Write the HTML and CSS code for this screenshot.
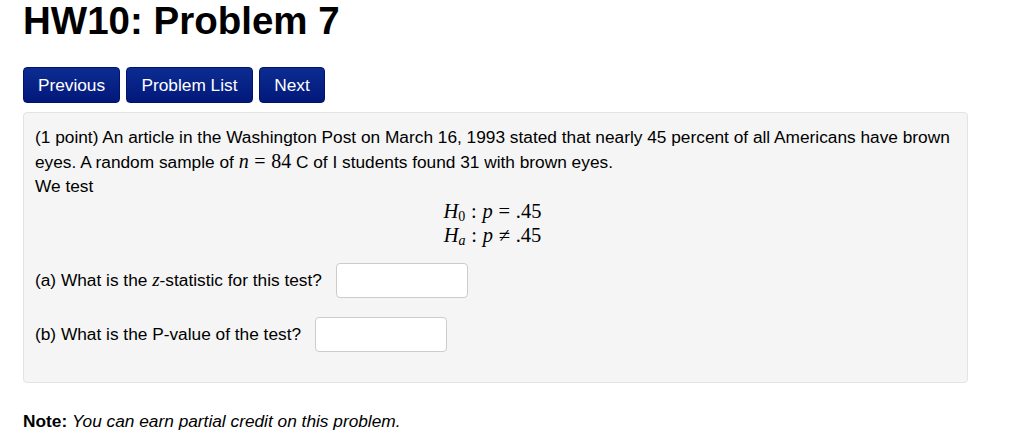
FILE: index.html
```html
<!DOCTYPE html>
<html>
<head>
<meta charset="utf-8">
<link rel="stylesheet" href="styles.css">
</head>
<body>
<div class="page">
  <h1 class="title">HW10: Problem 7</h1>
  <div class="nav">
    <a class="btn">Previous</a>
    <a class="btn">Problem List</a>
    <a class="btn">Next</a>
  </div>
  <div class="well">
    <p class="text">(1 point) An article in the Washington Post on March 16, 1993 stated that nearly 45 percent of all Americans have brown eyes. A random sample of <span class="math"><i>n</i><span class="rel">=</span>84</span> C of I students found 31 with brown eyes.<br>We test</p>
    <div class="display">
      <div class="mline"><i>H</i><sub>0</sub><span class="rel">:</span><i>p</i><span class="rel">=</span>.45</div>
      <div class="mline"><i>H</i><sub><i>a</i></sub><span class="rel">:</span><i>p</i><span class="rel">≠</span>.45</div>
    </div>
    <div class="q q-a"><span>(a) What is the <i class="mz">z</i>-statistic for this test?</span><input class="ans" type="text"></div>
    <div class="q q-b"><span>(b) What is the P-value of the test?</span><input class="ans" type="text"></div>
  </div>
  <p class="note"><b>Note:</b> <i>You can earn partial credit on this problem.</i></p>
</div>
</body>
</html>
```
FILE: styles.css
```css
html, body { margin: 0; padding: 0; background: #fff; }
body { font-family: "Liberation Sans", Arial, sans-serif; color: #000; }
.page { padding: 0 56px 0 23px; }
.title {
  margin: 0;
  padding-top: 1px;
  font-size: 38.5px;
  line-height: 40px;
  font-weight: bold;
}
.nav { display: flex; gap: 6px; margin-top: 26px; }
.btn {
  display: flex; align-items: center; justify-content: center;
  height: 36px; box-sizing: border-box;
  padding: 0;
  font-size: 17.3px;
  color: #fff;
  background: linear-gradient(#0c2c92, #02187a);
  border: 1px solid #021466;
  border-radius: 4px;
}
.btn:nth-child(1) { width: 97px; }
.btn:nth-child(2) { width: 127px; }
.btn:nth-child(3) { width: 66px; }
.well {
  margin-top: 9px;
  height: 271px; box-sizing: border-box;
  background: #f5f5f5;
  border: 1px solid #e3e3e3;
  border-radius: 4px;
  padding: 12px 11px;
  font-size: 17.3px;
  line-height: 24.5px;
}
.text { margin: 0; }
.math { font-family: "Liberation Serif", "Times New Roman", serif; font-size: 20px; line-height: 1; }
.rel { display: inline-block; margin: 0 0.28em; }
.display {
  font-family: "Liberation Serif", "Times New Roman", serif;
  font-size: 20.5px;
  line-height: 24px;
  text-align: center;
  margin-top: 0;
  padding-right: 6px;
}
.mline sub { font-size: 14px; line-height: 0; vertical-align: -3px; }
.q { display: flex; align-items: center; gap: 14px; }
.q-a { margin-top: 16px; }
.q-b { margin-top: 19px; }
.mz { font-family: "Liberation Serif", serif; font-size: 19px; line-height: 1; }
.ans {
  width: 132px; height: 35px; box-sizing: border-box;
  border: 1px solid #ccc;
  border-radius: 4px;
  background: #fff;
  margin: 0; padding: 4px 6px;
}
.note { margin: 26px 0 0; font-size: 17.3px; line-height: 24px; }
```
